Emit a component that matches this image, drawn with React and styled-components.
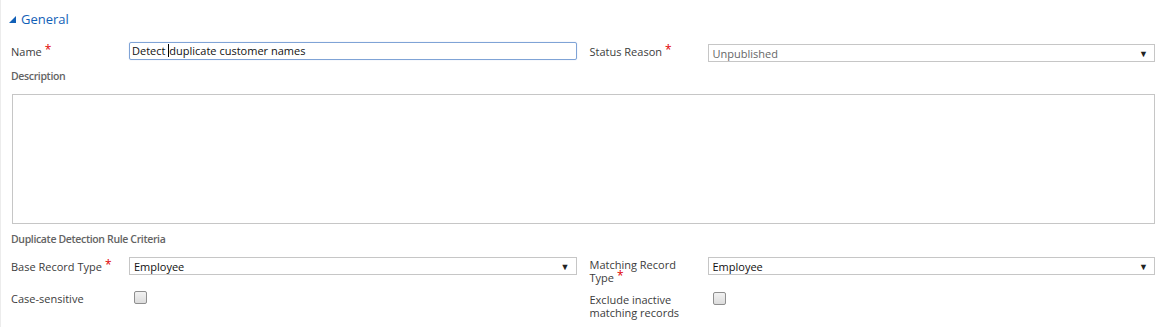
import styled, { createGlobalStyle } from "styled-components";

const GlobalStyle = createGlobalStyle`
  body {
    margin: 0;
    background: #fff;
    font-family: "Open Sans", "Noto Sans", sans-serif;
  }
`;

const Page = styled.div`
  width: 1157px;
  height: 327px;
  box-sizing: border-box;
  padding: 0 2px 0 10px;
  border-left: 1px solid #ececec;
  overflow: hidden;
`;

const SectionHeader = styled.div`
  display: flex;
  align-items: center;
  gap: 5px;
  padding-top: 9px;
  height: 21px;
  color: #1160b7;
  font-size: 13px;
  line-height: 21px;
  margin-left: -2px;
`;

const FormRow = styled.div`
  display: grid;
  grid-template-columns: 1fr 1fr;
  column-gap: 13px;
  margin-top: ${(p) => p.$top || 0}px;
`;

const Field = styled.div`
  display: grid;
  grid-template-columns: 118px 1fr;
  align-items: start;
`;

const Label = styled.div`
  font-size: 11px;
  line-height: 13px;
  color: #3c3c3c;
  padding-top: ${(p) => p.$pad || 0}px;
`;

const Required = styled.span`
  color: #e00000;
  font-size: 12px;
  line-height: 8px;
  margin-left: 3px;
  vertical-align: 2px;
`;

const SubHeading = styled.div`
  font-size: 10.5px;
  line-height: 16px;
  font-weight: 600;
  letter-spacing: -0.35px;
  color: #636363;
  margin-top: ${(p) => p.$top || 0}px;
`;

const TextBox = styled.div`
  height: 18px;
  box-sizing: border-box;
  border: 1px solid #7fa3d6;
  border-radius: 2px;
  box-shadow: 0 0 1px #a9c3e8;
  padding: 0 2px;
  font-size: 11px;
  line-height: 16px;
  color: #111;
  white-space: nowrap;
`;

const Caret = styled.span`
  display: inline-block;
  width: 1px;
  height: 13px;
  background: #000;
  vertical-align: -2px;
`;

const SelectBox = styled.div`
  display: flex;
  align-items: center;
  justify-content: space-between;
  height: 18px;
  box-sizing: border-box;
  margin-top: ${(p) => p.$top || 0}px;
  border: 1px solid #c6c6c6;
  padding: 0 6px 0 4px;
  font-size: 11px;
  color: ${(p) => (p.$muted ? "#666" : "#111")};
`;

const Arrow = styled.span`
  font-size: 9px;
  color: #222;
`;

const TextArea = styled.div`
  margin-top: 10px;
  margin-left: 1px;
  height: 130px;
  box-sizing: border-box;
  border: 1px solid #c6c6c6;
`;

const CheckBox = styled.span`
  display: block;
  width: 13px;
  height: 13px;
  box-sizing: border-box;
  margin: ${(p) => p.$top || 0}px 0 0 ${(p) => p.$left || 0}px;
  border: 1px solid #8f8f8f;
  border-radius: 2px;
  background: linear-gradient(#f2f2f2, #dcdcdc);
`;

const Triangle = () => (
  <svg width="7" height="7" viewBox="0 0 7 7">
    <polygon points="7,0 7,7 0,7" fill="#1160b7" />
  </svg>
);

const App = () => {
  return (
    <Page>
      <GlobalStyle />
      <SectionHeader>
        <Triangle />
        General
      </SectionHeader>

      <FormRow $top={12}>
        <Field>
          <Label $pad={3}>
            Name<Required>*</Required>
          </Label>
          <TextBox>
            Detect <Caret />duplicate customer names
          </TextBox>
        </Field>
        <Field>
          <Label $pad={3}>
            Status Reason<Required>*</Required>
          </Label>
          <SelectBox $muted $top={2}>
            Unpublished
            <Arrow>▼</Arrow>
          </SelectBox>
        </Field>
      </FormRow>

      <SubHeading $top={6}>Description</SubHeading>
      <TextArea />

      <SubHeading $top={7}>Duplicate Detection Rule Criteria</SubHeading>

      <FormRow $top={10}>
        <Field>
          <Label $pad={3}>
            Base Record Type<Required>*</Required>
          </Label>
          <SelectBox>
            Employee
            <Arrow>▼</Arrow>
          </SelectBox>
        </Field>
        <Field>
          <Label $pad={1}>
            Matching Record
            <br />
            Type<Required>*</Required>
          </Label>
          <SelectBox>
            Employee
            <Arrow>▼</Arrow>
          </SelectBox>
        </Field>
      </FormRow>

      <FormRow $top={7}>
        <Field>
          <Label $pad={1}>Case-sensitive</Label>
          <CheckBox $left={5} />
        </Field>
        <Field>
          <Label $pad={2}>
            Exclude inactive
            <br />
            matching records
          </Label>
          <CheckBox $left={5} $top={1} />
        </Field>
      </FormRow>
    </Page>
  );
};

export default App;
